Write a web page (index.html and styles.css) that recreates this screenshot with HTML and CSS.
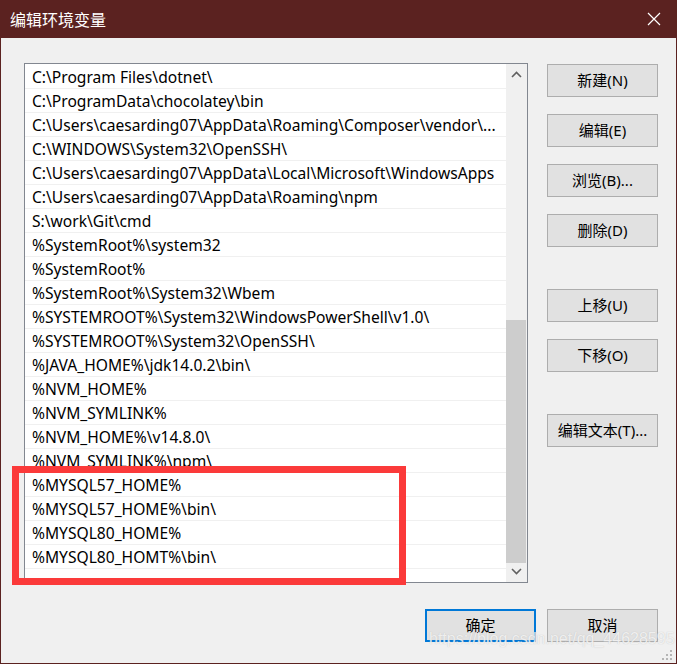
FILE: index.html
```html
<!DOCTYPE html>
<html lang="zh-CN">
<head>
  <meta charset="UTF-8">
  <title>编辑环境变量</title>
  <link rel="stylesheet" href="styles.css">
</head>
<body>
  <div class="window">
    <div class="titlebar">
      <span class="title">编辑环境变量</span>
      <svg class="close" width="14" height="14" viewBox="0 0 14 14">
        <path d="M1 1 L13 13 M13 1 L1 13" stroke="#fff" stroke-width="1.2" fill="none"/>
      </svg>
    </div>

    <div class="content">
      <div class="listbox">
        <ul class="rows">
          <li>C:\Program Files\dotnet\</li>
          <li>C:\ProgramData\chocolatey\bin</li>
          <li>C:\Users\caesarding07\AppData\Roaming\Composer\vendor\...</li>
          <li>C:\WINDOWS\System32\OpenSSH\</li>
          <li>C:\Users\caesarding07\AppData\Local\Microsoft\WindowsApps</li>
          <li>C:\Users\caesarding07\AppData\Roaming\npm</li>
          <li>S:\work\Git\cmd</li>
          <li>%SystemRoot%\system32</li>
          <li>%SystemRoot%</li>
          <li>%SystemRoot%\System32\Wbem</li>
          <li>%SYSTEMROOT%\System32\WindowsPowerShell\v1.0\</li>
          <li>%SYSTEMROOT%\System32\OpenSSH\</li>
          <li>%JAVA_HOME%\jdk14.0.2\bin\</li>
          <li>%NVM_HOME%</li>
          <li>%NVM_SYMLINK%</li>
          <li>%NVM_HOME%\v14.8.0\</li>
          <li>%NVM_SYMLINK%\npm\</li>
          <li>%MYSQL57_HOME%</li>
          <li>%MYSQL57_HOME%\bin\</li>
          <li>%MYSQL80_HOME%</li>
          <li>%MYSQL80_HOMT%\bin\</li>
        </ul>
        <div class="scrollbar">
          <div class="arrow">
            <svg width="11" height="7" viewBox="0 0 11 7"><path d="M1 6 L5.5 1.5 L10 6" stroke="#606060" stroke-width="1.6" fill="none"/></svg>
          </div>
          <div class="track"><div class="thumb"></div></div>
          <div class="arrow">
            <svg width="11" height="7" viewBox="0 0 11 7"><path d="M1 1 L5.5 5.5 L10 1" stroke="#606060" stroke-width="1.6" fill="none"/></svg>
          </div>
        </div>
      </div>

      <div class="side">
        <button class="btn">新建(N)</button>
        <button class="btn">编辑(E)</button>
        <button class="btn">浏览(B)...</button>
        <button class="btn">删除(D)</button>
        <button class="btn gap">上移(U)</button>
        <button class="btn">下移(O)</button>
        <button class="btn gap">编辑文本(T)...</button>
      </div>
    </div>

    <div class="footer">
      <button class="btn default">确定</button>
      <button class="btn">取消</button>
    </div>

    <!-- 标注框和水印，盖在内容上面 -->
    <div class="mark"></div>
    <div class="watermark">https://blog.csdn.net/qq_44628595</div>
    <svg class="grip" width="10" height="10" viewBox="0 0 10 10">
      <rect x="8" y="0" width="2" height="2" fill="#b5b5b5"/>
      <rect x="4" y="4" width="2" height="2" fill="#b5b5b5"/>
      <rect x="8" y="4" width="2" height="2" fill="#b5b5b5"/>
      <rect x="0" y="8" width="2" height="2" fill="#b5b5b5"/>
      <rect x="4" y="8" width="2" height="2" fill="#b5b5b5"/>
      <rect x="8" y="8" width="2" height="2" fill="#b5b5b5"/>
    </svg>
  </div>
</body>
</html>
```

FILE: styles.css
```css
* { margin: 0; padding: 0; box-sizing: border-box; }
body { font-family: "Segoe UI", "Noto Sans", "Noto Sans CJK SC", sans-serif; font-size: 15px; color: #000; background: #f0f0f0; }

.window { position: relative; width: 677px; height: 664px; border: 1px solid #5b2220; border-top: 0; background: #f0f0f0; display: flex; flex-direction: column; }

.titlebar { height: 38px; background: #5b2220; color: #fff; display: flex; align-items: center; justify-content: space-between; padding: 0 15px 0 9px; }
.titlebar .title { font-family: "Noto Sans CJK SC", sans-serif; font-size: 16px; }

.content { display: flex; padding: 25px 18px 0 23px; }

.listbox { width: 504px; height: 520px; border: 1px solid #828790; background: #fff; display: flex; }
.rows { flex: 1; list-style: none; padding-top: 1px; overflow: hidden; }
.rows li { height: 24px; line-height: 24px; padding-left: 7px; font-size: 15.6px; border-bottom: 1px solid #f0f0f0; white-space: nowrap; }

.scrollbar { width: 21px; background: #f0f0f0; display: flex; flex-direction: column; }
.scrollbar .arrow { height: 21px; display: flex; align-items: center; justify-content: center; }
.scrollbar .track { flex: 1; display: flex; flex-direction: column; justify-content: flex-end; padding: 0 1px 0 0; }
.scrollbar .thumb { height: 243px; background: #cdcdcd; margin-bottom: -2px; }

.side { display: flex; flex-direction: column; gap: 17px; margin-left: 19px; padding-top: 1px; }
.side .gap { margin-top: 25px; }

.btn { width: 111px; height: 33px; padding-bottom: 2px; background: #e1e1e1; border: 1px solid #adadad; font-family: "Segoe UI", "Noto Sans", "Noto Sans CJK SC", sans-serif; font-size: 15px; color: #000; }
.btn.default { border: 2px solid #0078d7; }

.footer { display: flex; justify-content: flex-end; gap: 11px; padding: 26px 18px 0 0; }

.mark { position: absolute; left: 11px; top: 466px; width: 394px; height: 119px; border: 7px solid #fb3a3a; }
.watermark { position: absolute; left: 428px; top: 630px; font-family: "Liberation Sans", Arial, sans-serif; font-size: 16px; color: rgba(255, 255, 255, 0.75); text-shadow: 0 0 1px rgba(170, 170, 170, 0.7); }
.grip { position: absolute; right: 4px; bottom: 3px; }
```
